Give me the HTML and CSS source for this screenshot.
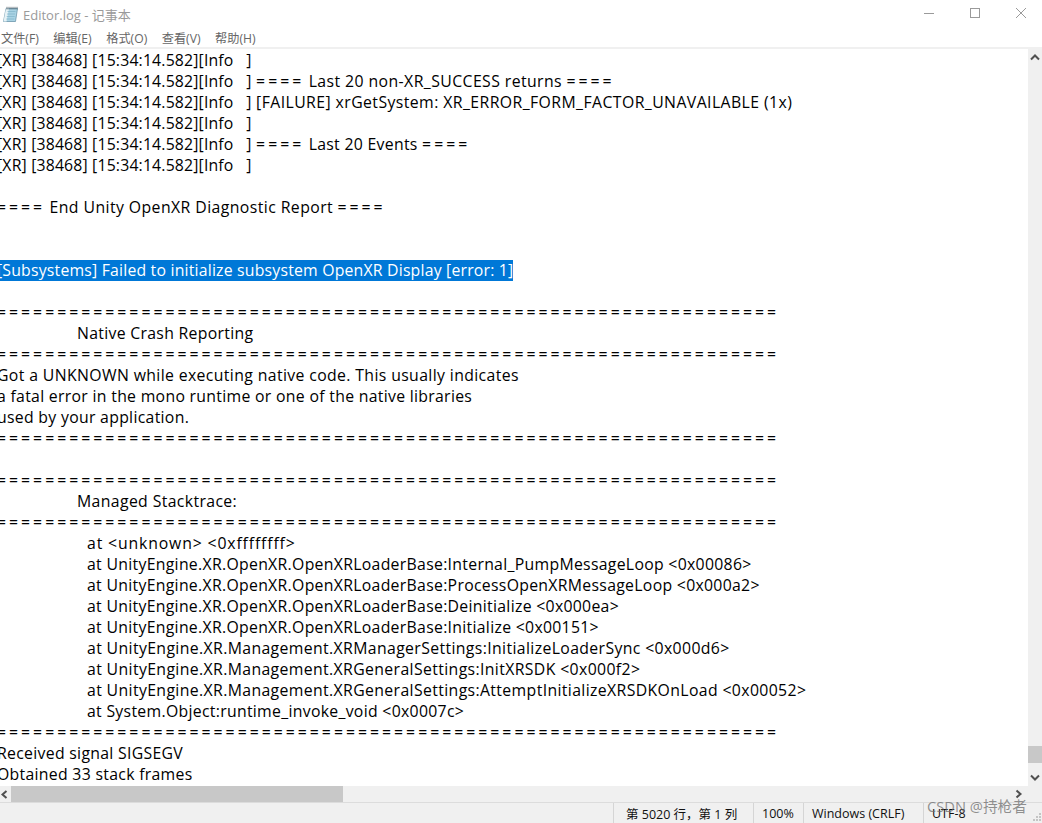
FILE: index.html
```html
<!DOCTYPE html>
<html lang="zh">
<head>
<meta charset="utf-8">
<title>Editor.log - 记事本</title>
<link rel="stylesheet" href="styles.css">
</head>
<body>
<div class="window">
  <header class="titlebar">
    <svg class="app-icon" width="16" height="16" viewBox="0 0 16 16">
      <path d="M4 2.500H15.500L13.500 15.500H1.500z" fill="#a9d3e4" stroke="#5c8aa0" stroke-width=".7"/>
      <path d="M4 2.500H7L4.500 15.500H1.500z" fill="#e6f2f6"/>
      <path d="M5.500 5.500h8M5 8h8M4.700 10.500h8M4.300 13h8" stroke="#7fb3c9" stroke-width=".7"/>
      <path d="M5 .8v2.700M7 .8v2.700M9 .8v2.700M11 .8v2.700M13 .8v2.700M15 .8v2.700" stroke="#4a5a64" stroke-width=".8"/>
    </svg>
    <span class="title">Editor.log - 记事本</span>
    <div class="controls">
      <svg class="ctl" width="46" height="28" viewBox="0 0 46 28"><path d="M20 13.500h10" stroke="#9a9a9a" fill="none"/></svg>
      <svg class="ctl" width="46" height="28" viewBox="0 0 46 28"><rect x="20.500" y="8.500" width="9" height="9" stroke="#9a9a9a" fill="none"/></svg>
      <svg class="ctl" width="46" height="28" viewBox="0 0 46 28"><path d="M20 8 30 18M30 8 20 18" stroke="#9a9a9a" fill="none"/></svg>
    </div>
  </header>
  <nav class="menubar">
    <span class="menu">文件(F)</span>
    <span class="menu">编辑(E)</span>
    <span class="menu">格式(O)</span>
    <span class="menu">查看(V)</span>
    <span class="menu">帮助(H)</span>
  </nav>
  <main class="editor">
    <div class="viewport">
      <div class="text">
        <div class="line"><span class="lead">[XR] [38468] [15:34:14.582][Info&nbsp;&nbsp; ]</span></div>
        <div class="line"><span class="lead">[XR] [38468] [15:34:14.582][Info&nbsp;&nbsp; ]</span> <span class="eq">====</span> <span class="tail">Last 20 non-XR_SUCCESS returns</span> <span class="eq">====</span></div>
        <div class="line"><span class="lead">[XR] [38468] [15:34:14.582][Info&nbsp;&nbsp; ]</span> <span class="tail">[FAILURE] xrGetSystem: XR_ERROR_FORM_FACTOR_UNAVAILABLE (1x)</span></div>
        <div class="line"><span class="lead">[XR] [38468] [15:34:14.582][Info&nbsp;&nbsp; ]</span></div>
        <div class="line"><span class="lead">[XR] [38468] [15:34:14.582][Info&nbsp;&nbsp; ]</span> <span class="eq">====</span> Last 20 Events <span class="eq">====</span></div>
        <div class="line"><span class="lead">[XR] [38468] [15:34:14.582][Info&nbsp;&nbsp; ]</span></div>
        <div class="line">&nbsp;</div>
        <div class="line"><span class="eq">====</span> <span class="tail">End Unity OpenXR Diagnostic Report</span> <span class="eq">====</span></div>
        <div class="line">&nbsp;</div>
        <div class="line">&nbsp;</div>
        <div class="line"><span class="selected">[Subsystems] Failed to initialize subsystem OpenXR Display [error: 1]</span></div>
        <div class="line">&nbsp;</div>
        <div class="line eq">=================================================================</div>
        <div class="line tab1">Native Crash Reporting</div>
        <div class="line eq">=================================================================</div>
        <div class="line roomy">Got a UNKNOWN while executing native code. This usually indicates</div>
        <div class="line">a fatal error in the mono runtime or one of the native libraries</div>
        <div class="line">used by your application.</div>
        <div class="line eq">=================================================================</div>
        <div class="line">&nbsp;</div>
        <div class="line eq">=================================================================</div>
        <div class="line tab1 roomy">Managed Stacktrace:</div>
        <div class="line eq">=================================================================</div>
        <div class="line tab2 wide">at &lt;unknown&gt; &lt;0xffffffff&gt;</div>
        <div class="line tab2">at UnityEngine.XR.OpenXR.OpenXRLoaderBase:Internal_PumpMessageLoop &lt;0x00086&gt;</div>
        <div class="line tab2">at UnityEngine.XR.OpenXR.OpenXRLoaderBase:ProcessOpenXRMessageLoop &lt;0x000a2&gt;</div>
        <div class="line tab2">at UnityEngine.XR.OpenXR.OpenXRLoaderBase:Deinitialize &lt;0x000ea&gt;</div>
        <div class="line tab2">at UnityEngine.XR.OpenXR.OpenXRLoaderBase:Initialize &lt;0x00151&gt;</div>
        <div class="line tab2 roomy">at UnityEngine.XR.Management.XRManagerSettings:InitializeLoaderSync &lt;0x000d6&gt;</div>
        <div class="line tab2 roomy">at UnityEngine.XR.Management.XRGeneralSettings:InitXRSDK &lt;0x000f2&gt;</div>
        <div class="line tab2 roomy">at UnityEngine.XR.Management.XRGeneralSettings:AttemptInitializeXRSDKOnLoad &lt;0x00052&gt;</div>
        <div class="line tab2">at System.Object:runtime_invoke_void &lt;0x0007c&gt;</div>
        <div class="line eq">=================================================================</div>
        <div class="line">Received signal SIGSEGV</div>
        <div class="line">Obtained 33 stack frames</div>
      </div>
    </div>
    <div class="vscroll">
      <svg class="arrow" width="14" height="17" viewBox="0 0 14 17"><path d="M3 10.500 7 6.500 11 10.500" stroke="#505050" stroke-width="2" fill="none"/></svg>
      <div class="vtrack"><div class="vthumb"></div></div>
      <svg class="arrow" width="14" height="17" viewBox="0 0 14 17"><path d="M3 6.500 7 10.500 11 6.500" stroke="#505050" stroke-width="2" fill="none"/></svg>
    </div>
    <div class="hscroll">
      <svg class="arrow" width="11" height="16" viewBox="0 0 11 16"><path d="M6.500 5 2.500 8.500 6.500 12" stroke="#505050" stroke-width="2" fill="none"/></svg>
      <div class="hthumb"></div>
      <svg class="arrow harrow-right" width="17" height="16" viewBox="0 0 17 16"><path d="M5.500 4.500 9.500 8 5.500 11.500" stroke="#505050" stroke-width="2" fill="none"/></svg>
    </div>
    <div class="corner"></div>
  </main>
  <footer class="statusbar">
    <span class="cell cell-pos">第 5020 行，第 1 列</span>
    <span class="cell cell-zoom">100%</span>
    <span class="cell cell-eol">Windows (CRLF)</span>
    <span class="cell cell-enc">UTF-8</span>
    <svg class="grip" width="12" height="12" viewBox="0 0 12 12">
      <path d="M9 2h2v2H9zM6 5h2v2H6zM9 5h2v2H9zM3 8h2v2H3zM6 8h2v2H6zM9 8h2v2H9z" fill="#c4c4c4"/>
    </svg>
  </footer>
  <div class="watermark">CSDN @持枪者</div>
</div>
</body>
</html>
```
FILE: styles.css
```css
* { box-sizing: border-box; }
html, body { margin: 0; padding: 0; height: 100%; background: #fff; }
body { overflow: hidden; font-family: "Open Sans", "Noto Sans CJK SC", sans-serif; }
.window { position: relative; display: flex; flex-direction: column; width: 1042px; height: 823px; }
.titlebar { display: flex; align-items: center; height: 28px; flex: none; padding-left: 2px; }
.app-icon { flex: none; margin-right: 5px; }
.title { font-size: 13px; color: #9a9a9a; }
.controls { margin-left: auto; display: flex; }
.ctl { display: block; }
.menubar { display: flex; height: 19px; flex: none; align-items: center; gap: 14.500px; padding-left: 1px; }
.menu { font-size: 12.200px; color: #666; }
.editor { flex: 1; min-height: 0; display: grid; grid-template-columns: 1fr 14px; grid-template-rows: 1fr 16px; border-top: 2px solid #f0f0f0; }
.viewport { overflow: hidden; background: #fff; }
.text { margin-left: -3px; padding-top: 1px; white-space: nowrap; font-size: 15.800px; letter-spacing: .3px; line-height: 21px; color: #000; }
.line { height: 21px; }
.lead { letter-spacing: .17px; }
.tail { letter-spacing: .42px; }
.eq { letter-spacing: 3px; }
.roomy { letter-spacing: .37px; }
.wide { letter-spacing: .85px; }
.tab1 { padding-left: 80px; }
.tab2 { padding-left: 90px; }
.selected { background: #0078d7; color: #fff; display: inline-block; height: 21px; letter-spacing: .2px; }
.vscroll { display: flex; flex-direction: column; background: #f0f0f0; }
.arrow { display: block; flex: none; }
.vtrack { flex: 1; display: flex; flex-direction: column; justify-content: flex-end; padding-bottom: 6px; }
.vthumb { height: 17px; background: #c8c8c8; }
.hscroll { display: flex; background: #f0f0f0; align-items: stretch; }
.hthumb { width: 332px; background: #c8c8c8; flex: none; }
.harrow-right { margin-left: auto; }
.corner { background: #f0f0f0; }
.statusbar { display: flex; height: 21px; flex: none; background: #f0f0f0; border-top: 1px solid #dcdcdc; font-size: 12.500px; color: #111; padding-left: 613px; }
.cell { display: flex; align-items: center; border-left: 1px solid #d5d5d5; padding-left: 12px; white-space: nowrap; }
.cell-pos { width: 140px; }
.cell-zoom { width: 50px; padding-left: 8px; }
.cell-eol { width: 120px; padding-left: 8px; }
.cell-enc { flex: 1; padding-left: 8px; }
.grip { flex: none; align-self: flex-end; }
.watermark { position: absolute; right: 15px; top: 795px; font-size: 14.700px; color: rgba(110,110,110,.75); white-space: nowrap; }
```
